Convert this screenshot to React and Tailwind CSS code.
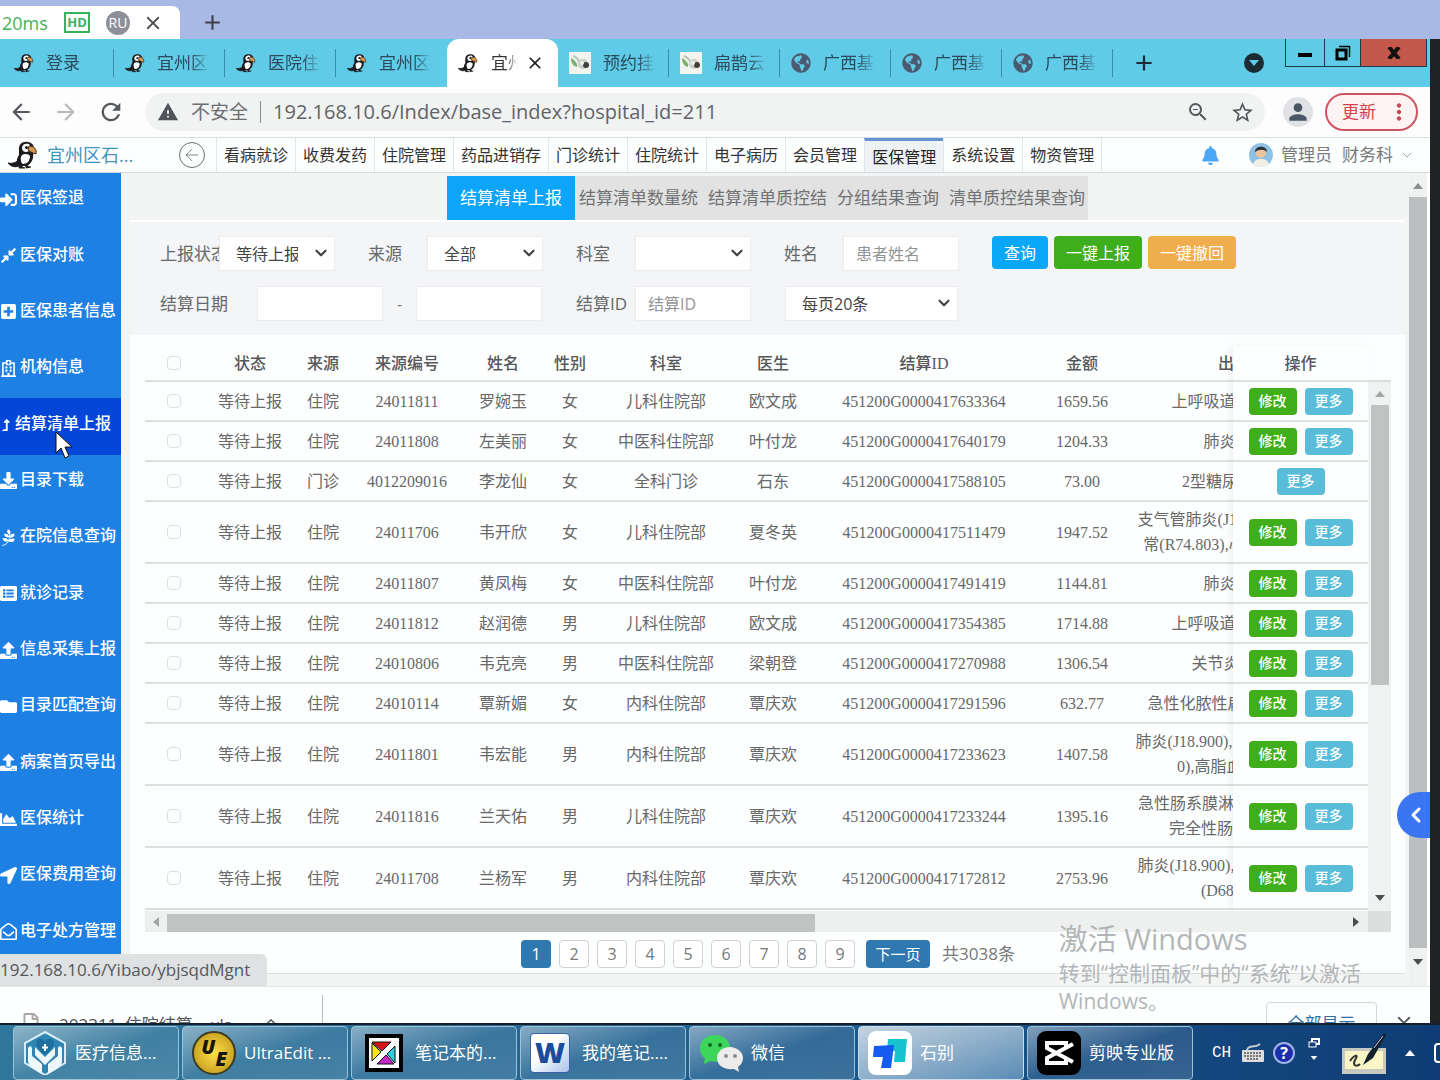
import {
  FaSignInAlt, FaCompressAlt, FaPlusSquare, FaRegHospital, FaLevelUpAlt, FaDownload,
  FaPagelines, FaListAlt, FaUpload, FaFolder, FaChartArea, FaLocationArrow,
  FaRegEnvelopeOpen, FaGlobeAmericas, FaBell, FaRegFile,
} from "react-icons/fa";
import {
  MdArrowBack, MdArrowForward, MdRefresh, MdWarning, MdZoomOut, MdStarBorder,
  MdPerson, MdMoreVert, MdClose, MdAdd,
} from "react-icons/md";
import { ChevronDown, ChevronLeft, ChevronUp, ArrowLeft } from "lucide-react";

const browserTabs = [
  { id: 1, icon: "bird", title: "登录" },
  { id: 2, icon: "bird", title: "宜州区石别" },
  { id: 3, icon: "bird", title: "医院住院" },
  { id: 4, icon: "bird", title: "宜州区石别" },
  { id: 5, icon: "bird", title: "宜州区", active: true },
  { id: 6, icon: "photo", title: "预约挂号" },
  { id: 7, icon: "photo", title: "扁鹊云医" },
  { id: 8, icon: "globe", title: "广西基本" },
  { id: 9, icon: "globe", title: "广西基本" },
  { id: 10, icon: "globe", title: "广西基本" },
];

const navItems = [
  "看病就诊", "收费发药", "住院管理", "药品进销存", "门诊统计", "住院统计",
  "电子病历", "会员管理", "医保管理", "系统设置", "物资管理",
];

const sideItems = [
  { title: "医保签退", Icon: FaSignInAlt },
  { title: "医保对账", Icon: FaCompressAlt },
  { title: "医保患者信息", Icon: FaPlusSquare },
  { title: "机构信息", Icon: FaRegHospital },
  { title: "结算清单上报", Icon: FaLevelUpAlt, active: true },
  { title: "目录下载", Icon: FaDownload },
  { title: "在院信息查询", Icon: FaPagelines },
  { title: "就诊记录", Icon: FaListAlt },
  { title: "信息采集上报", Icon: FaUpload },
  { title: "目录匹配查询", Icon: FaFolder },
  { title: "病案首页导出", Icon: FaUpload },
  { title: "医保统计", Icon: FaChartArea },
  { title: "医保费用查询", Icon: FaLocationArrow },
  { title: "电子处方管理", Icon: FaRegEnvelopeOpen },
];

const subTabs = ["结算清单数量统", "结算清单质控结", "分组结果查询", "清单质控结果查询"];

const rows = [
  { source: "住院", no: "24011811", name: "罗婉玉", sex: "女", dept: "儿科住院部", doctor: "欧文成", id: "451200G0000417633364", amount: "1659.56", diag: ["上呼吸道感染(J06.900)"] },
  { source: "住院", no: "24011808", name: "左美丽", sex: "女", dept: "中医科住院部", doctor: "叶付龙", id: "451200G0000417640179", amount: "1204.33", diag: ["肺炎(J18.900)"] },
  { source: "门诊", no: "4012209016", name: "李龙仙", sex: "女", dept: "全科门诊", doctor: "石东", id: "451200G0000417588105", amount: "73.00", diag: ["2型糖尿病(E11.900)"], moreOnly: true },
  { source: "住院", no: "24011706", name: "韦开欣", sex: "女", dept: "儿科住院部", doctor: "夏冬英", id: "451200G0000417511479", amount: "1947.52", diag: ["支气管肺炎(J18.000),肌酸激酶异", "常(R74.803),心肌损害(I51.802),"] },
  { source: "住院", no: "24011807", name: "黄凤梅", sex: "女", dept: "中医科住院部", doctor: "叶付龙", id: "451200G0000417491419", amount: "1144.81", diag: ["肺炎(J18.900)"] },
  { source: "住院", no: "24011812", name: "赵润德", sex: "男", dept: "儿科住院部", doctor: "欧文成", id: "451200G0000417354385", amount: "1714.88", diag: ["上呼吸道感染(J06.900)"] },
  { source: "住院", no: "24010806", name: "韦克亮", sex: "男", dept: "中医科住院部", doctor: "梁朝登", id: "451200G0000417270988", amount: "1306.54", diag: ["关节炎(M13.900)"] },
  { source: "住院", no: "24010114", name: "覃新媚", sex: "女", dept: "内科住院部", doctor: "覃庆欢", id: "451200G0000417291596", amount: "632.77", diag: ["急性化脓性扁桃体炎(J03.901)"] },
  { source: "住院", no: "24011801", name: "韦宏能", sex: "男", dept: "内科住院部", doctor: "覃庆欢", id: "451200G0000417233623", amount: "1407.58", diag: ["肺炎(J18.900),肝功能异常(R94.50", "0),高脂血症(E78.500)"] },
  { source: "住院", no: "24011816", name: "兰天佑", sex: "男", dept: "儿科住院部", doctor: "覃庆欢", id: "451200G0000417233244", amount: "1395.16", diag: ["急性肠系膜淋巴结炎(I88.000),不", "完全性肠梗阻(K56.700)"] },
  { source: "住院", no: "24011708", name: "兰杨军", sex: "男", dept: "内科住院部", doctor: "覃庆欢", id: "451200G0000417172812", amount: "2753.96", diag: ["肺炎(J18.900),凝血功能障碍疾病", "(D68.900x001)"] },
];

const Bird = ({ className }) => (
  <svg viewBox="0 0 30 28" className={className} aria-hidden="true">
    <path d="M11 10 C10 3 15 0 20 1 C26 2 27 7 25 11 C26 17 24 22 19 25 L12 25 C8 23 8 18 11 14 Z" fill="#1d1a1e" />
    <path d="M14 7 C14 3 18 2 21 3 C23 5 23 8 21 10 C18 12 14 11 14 7 Z" fill="#fdfdfd" />
    <path d="M14 14 C17 12 21 13 22 15 C22 20 19 23 15 23 C12 21 12 17 14 14 Z" fill="#fdfdfd" />
    <path d="M21 5 C26 5 29 8 28 13 C25 12 22 11 20 9 Z" fill="#d9954a" stroke="#3a2a1d" strokeWidth="1" />
    <circle cx="18.500" cy="6.500" r="1.500" fill="#1d1a1e" />
    <path d="M12 18 C8 22 4 23 0 22 C3 26 8 27 13 24 Z M12 24 L11 27 L17 27 M18 24 L18 27 L23 26" fill="#1d1a1e" stroke="#1d1a1e" strokeWidth="1" />
  </svg>
);

const TabIcon = ({ kind }) => {
  if (kind === "bird") return <Bird className="h-5 w-5 shrink-0" />;
  if (kind === "globe") return <FaGlobeAmericas className="h-5 w-5 shrink-0 text-[#4b5a70]" />;
  return (
    <svg viewBox="0 0 22 22" className="h-[22px] w-[22px] shrink-0" aria-hidden="true">
      <rect width="22" height="22" fill="#f1f5ee" />
      <path d="M2 6 C6 8 9 12 8 15 C4 14 2 11 2 6 Z" fill="#7fae6c" />
      <path d="M4 4 C9 5 9 9 12 11" stroke="#b9c4b9" strokeWidth="2" fill="none" />
      <circle cx="14" cy="12" r="5" fill="#c8cfca" />
      <circle cx="17" cy="13" r="3" fill="#3b423c" />
      <circle cx="13" cy="11" r="2" fill="#eef2ee" />
    </svg>
  );
};

const Triangle = ({ className }) => (
  <svg viewBox="0 0 10 6" className={className} aria-hidden="true">
    <path d="M0 6 L5 0 L10 6 Z" fill="currentColor" />
  </svg>
);

const RemoteBar = () => (
  <header className="flex h-[39px] shrink-0 items-end bg-[#a9b9e6]">
    <div className="flex h-[33px] w-[180px] items-center rounded-tr-lg bg-white pl-[2px]">
      <span className="w-[62px] text-lg text-[#3fb25c]">20ms</span>
      <span className="flex h-[21px] w-[26px] items-center justify-center border-2 border-[#37b35d] text-[13px] font-bold text-[#37b35d]">HD</span>
      <span className="ml-4 flex h-6 w-6 items-center justify-center rounded-full bg-[#8d8f99] text-sm text-white">RU</span>
      <button aria-label="关闭" className="ml-3 text-[#4c4c50]">
        <MdClose size={22} />
      </button>
    </div>
    <button aria-label="新建" className="mb-1 ml-5 text-[#3c3f48]">
      <MdAdd size={25} />
    </button>
  </header>
);

const BrowserTabs = () => (
  <div className="flex h-12 shrink-0 bg-[#60cbe6] pl-[3px]">
    {browserTabs.map((tab) =>
      tab.active ? (
        <div key={tab.id} className="flex w-[111px] shrink-0 items-center rounded-t-xl bg-white pl-[11px]">
          <TabIcon kind={tab.icon} />
          <span className="ml-[13px] w-[27px] overflow-hidden whitespace-nowrap text-[17px] text-[#333] [mask-image:linear-gradient(90deg,#000_55%,transparent)]">{tab.title}</span>
          <button aria-label="关闭标签" className="ml-[7px] text-[#222]">
            <MdClose size={20} />
          </button>
        </div>
      ) : (
        <div key={tab.id} className="flex w-[111px] shrink-0 items-center pl-[11px]">
          <TabIcon kind={tab.icon} />
          <span className="ml-3 w-[53px] overflow-hidden whitespace-nowrap text-[17px] text-[#2b4a5c] [mask-image:linear-gradient(90deg,#000_65%,transparent)]">{tab.title}</span>
          {tab.id !== 4 && <span className="ml-auto h-7 w-px bg-[#3a8ba6]" />}
        </div>
      )
    )}
    <button aria-label="新标签" className="ml-[18px] text-[#1c2a33]">
      <MdAdd size={26} />
    </button>
    <span className="my-auto ml-auto mr-[21px] flex h-5 w-5 items-center justify-center rounded-full bg-[#1c2a33] text-[#60cbe6]">
      <Triangle className="h-[6px] w-[10px] rotate-180" />
    </span>
    <div className="mr-[3px] flex h-7 border-x border-b border-[#1a3c4a]">
      <button aria-label="最小化" className="flex w-[39px] items-center justify-center border-r border-[#1a3c4a]">
        <span className="mt-1 h-1 w-[14px] bg-black" />
      </button>
      <button aria-label="还原" className="flex w-9 items-center justify-center border-r border-[#1a3c4a]">
        <svg viewBox="0 0 16 16" className="h-4 w-4" fill="none" stroke="#000">
          <rect x="2" y="5" width="9" height="9" strokeWidth="3" />
          <path d="M4 1.500 H14.500 V12" strokeWidth="1.500" />
        </svg>
      </button>
      <button aria-label="关闭窗口" className="flex w-[65px] items-center justify-center bg-[#c4584c]">
        <svg viewBox="0 0 14 12" className="h-3 w-[14px]">
          <path d="M2 0 L12 12 M12 0 L2 12" stroke="#111" strokeWidth="4" />
        </svg>
      </button>
    </div>
  </div>
);

const AddressBar = () => (
  <div className="flex h-[51px] shrink-0 items-center border-b border-[#d8dadc] bg-[#fdfdfd] pl-2">
    <button aria-label="后退" className="text-[#55585c]"><MdArrowBack size={26} /></button>
    <button aria-label="前进" className="ml-[19px] text-[#b6b8ba]"><MdArrowForward size={26} /></button>
    <button aria-label="刷新" className="ml-[18px] text-[#55585c]"><MdRefresh size={28} /></button>
    <div className="ml-5 flex h-[38px] min-w-0 flex-1 items-center rounded-full bg-[#f1f3f3] pl-3">
      <MdWarning size={22} className="shrink-0 text-[#505458]" />
      <span className="ml-3 shrink-0 text-[19px] text-[#6c6f72]">不安全</span>
      <span className="ml-3 h-[22px] w-px bg-[#8b8d90]" />
      <input
        aria-label="网址"
        readOnly
        value="192.168.10.6/Index/base_index?hospital_id=211"
        className="ml-3 min-w-0 flex-1 bg-transparent text-[20px] text-[#5f6367] outline-none"
      />
      <button aria-label="缩放" className="text-[#55585c]"><MdZoomOut size={24} /></button>
      <button aria-label="收藏" className="ml-5 mr-[10px] text-[#55585c]"><MdStarBorder size={25} /></button>
    </div>
    <span className="ml-[18px] flex h-[30px] w-[30px] items-center justify-center rounded-full bg-[#e0e2e6] text-[#4a5666]">
      <MdPerson size={26} />
    </span>
    <button className="ml-3 mr-3 flex h-[38px] w-[93px] items-center rounded-full border-2 border-[#cf5560] bg-[#fdf3f3] pl-[15px] text-[17px] text-[#d2434d]">
      更新
      <MdMoreVert size={26} className="ml-[10px]" />
    </button>
  </div>
);

const AppNav = () => (
  <nav className="flex h-[35px] shrink-0 items-center border-b border-[#d5d7d8] bg-[#fdfefe] pl-2">
    <Bird className="h-7 w-[30px]" />
    <a href="#home" className="ml-[9px] w-[93px] text-lg text-[#4495bd]">宜州区石...</a>
    <button aria-label="返回" className="ml-[39px] mr-[11px] flex h-[26px] w-[26px] items-center justify-center rounded-full border border-[#6b6e70] text-[#6b6e70]">
      <ArrowLeft size={20} strokeWidth={1} />
    </button>
    <div className="flex h-full">
      {navItems.map((item) => (
        <a
          key={item}
          href="#nav"
          className={
            item === "医保管理"
              ? "flex items-center border-l border-t-3 border-l-[#e4e6e8] border-t-[#6592d3] bg-[#eef2f5] px-[7px] text-base text-[#222]"
              : "flex items-center border-l border-[#e4e6e8] px-[7px] text-base text-[#333]"
          }
        >
          {item}
        </a>
      ))}
      <span className="w-px bg-[#e4e6e8]" />
    </div>
    <FaBell size={19} className="ml-auto text-[#4aa8f7]" />
    <svg viewBox="0 0 24 24" className="ml-[29px] h-6 w-6">
      <circle cx="12" cy="12" r="12" fill="#8fc0e6" />
      <path d="M4 22 C5 17 8 16 12 16 C16 16 19 17 20 22 C15 25 9 25 4 22 Z" fill="#f2f0e6" />
      <circle cx="12" cy="10" r="5" fill="#e9c39c" />
      <path d="M6 9 C6 2 18 2 18 9 C15 6 10 6 6 9 Z" fill="#2a2f38" />
    </svg>
    <button className="ml-2 mr-[15px] flex items-center text-[17px] text-[#77797b]">
      <span>管理员</span>
      <span className="ml-[10px] mr-[6px]">财务科</span>
      <ChevronDown size={16} strokeWidth={1} />
    </button>
  </nav>
);

const SideBar = () => (
  <aside className="w-[121px] shrink-0 overflow-hidden bg-[#1f80e4]">
    <ul className="flex h-full flex-col pb-6">
      {sideItems.map(({ title, Icon, active }) => (
        <li key={title} className={active ? "min-h-0 flex-1 bg-[#0447d8]" : "min-h-0 flex-1"}>
          <a href="#side" className="flex h-full items-center gap-[3px] whitespace-nowrap pb-2 text-base font-medium text-white">
            <Icon size={active ? 12 : 17} className="mt-1 shrink-0" />
            {title}
          </a>
        </li>
      ))}
    </ul>
  </aside>
);

const Select = ({ id, label, value, className }) => (
  <div className={"relative h-[35px] " + className}>
    <select id={id} aria-label={label} className="h-full w-full appearance-none border border-[#ececee] bg-white pl-4 pr-9 text-base text-[#444]">
      <option>{value}</option>
    </select>
    <ChevronDown size={18} strokeWidth={3} className="pointer-events-none absolute right-[5px] top-2 text-[#444]" />
  </div>
);

const labelClass = "w-[59px] shrink-0 overflow-hidden whitespace-nowrap text-[17px] text-[#66696b]";
const inputClass = "h-[35px] border border-[#ececee] bg-white px-3 text-base placeholder:text-[#929496]";

const FilterPanel = () => (
  <form className="flex flex-col gap-[15px] bg-[#f4f5f7] py-[14px] pl-[30px]">
    <div className="flex h-[35px] items-center">
      <label htmlFor="status" className={labelClass}>上报状态</label>
      <Select id="status" value="等待上报" className="mr-[33px] w-[116px]" />
      <label htmlFor="source" className={labelClass}>来源</label>
      <Select id="source" value="全部" className="mr-[33px] w-[116px]" />
      <label htmlFor="dept" className={labelClass}>科室</label>
      <Select id="dept" value="" className="mr-[33px] w-[116px]" />
      <label htmlFor="name" className={labelClass}>姓名</label>
      <input id="name" placeholder="患者姓名" className={inputClass + " mr-[33px] w-[116px]"} />
      <div className="flex h-full items-start gap-[6px] text-base text-white">
        <button type="button" className="h-[33px] rounded-sm bg-[#0aa7f7] px-3">查询</button>
        <button type="button" className="h-[33px] rounded-sm bg-[#3eae1c] px-3">一键上报</button>
        <button type="button" className="h-[33px] rounded-sm bg-[#f0ad4e] px-3">一键撤回</button>
      </div>
    </div>
    <div className="flex h-[35px] items-center">
      <label htmlFor="from" className="w-[97px] text-[17px] text-[#66696b]">结算日期</label>
      <input id="from" className={inputClass + " w-[126px]"} />
      <span className="w-[33px] text-center text-[#777]">-</span>
      <input id="to" aria-label="结束日期" className={inputClass + " mr-[34px] w-[126px]"} />
      <label htmlFor="sid" className={labelClass}>结算ID</label>
      <input id="sid" placeholder="结算ID" className={inputClass + " mr-[34px] w-[116px]"} />
      <Select id="size" label="每页条数" value="每页20条" className="w-[173px]" />
    </div>
  </form>
);

const thClass = "h-9 border-b-2 border-[#dcdedf] font-medium text-[#55585a]";

const SettlementTable = () => (
  <table className="w-[1226px] table-fixed border-separate border-spacing-0 text-center font-['Liberation_Serif','Noto_Sans_CJK_SC',serif] text-base leading-[25px] text-[#66686a]">
    <colgroup>
      <col className="w-[58px]" />
      <col className="w-[94px]" />
      <col className="w-[52px]" />
      <col className="w-[116px]" />
      <col className="w-[76px]" />
      <col className="w-[58px]" />
      <col className="w-[134px]" />
      <col className="w-[80px]" />
      <col className="w-[222px]" />
      <col className="w-[94px]" />
      <col className="w-[242px]" />
    </colgroup>
    <thead>
      <tr>
        <th className={thClass}>
          <input type="checkbox" aria-label="全选" className="mx-auto block h-[14px] w-[14px] appearance-none rounded-sm border border-[#dcdfe0]" />
        </th>
        {["状态", "来源", "来源编号", "姓名", "性别", "科室", "医生", "结算ID", "金额", "出院诊断"].map((title) => (
          <th key={title} className={thClass}>{title}</th>
        ))}
      </tr>
    </thead>
    <tbody>
      {rows.map((row) => (
        <tr key={row.id} className={row.diag.length > 1 ? "h-[62px] *:border-b-2 *:border-[#dcdedf]" : "h-10 *:border-b-2 *:border-[#dcdedf]"}>
          <td>
            <input type="checkbox" aria-label={row.name} className="mx-auto block h-[14px] w-[14px] appearance-none rounded-sm border border-[#dcdfe0]" />
          </td>
          <td>等待上报</td>
          <td>{row.source}</td>
          <td>{row.no}</td>
          <td>{row.name}</td>
          <td>{row.sex}</td>
          <td>{row.dept}</td>
          <td>{row.doctor}</td>
          <td>{row.id}</td>
          <td>{row.amount}</td>
          <td className="whitespace-nowrap">
            {row.diag.map((line) => (
              <div key={line}>{line}</div>
            ))}
          </td>
        </tr>
      ))}
    </tbody>
  </table>
);

const ActionTable = () => (
  <table className="w-full border-separate border-spacing-0 text-center">
    <thead>
      <tr>
        <th className={thClass}>操作</th>
      </tr>
    </thead>
    <tbody>
      {rows.map((row) => (
        <tr key={row.id} className={row.diag.length > 1 ? "h-[62px]" : "h-10"}>
          <td className="border-b-2 border-[#dcdedf]">
            <div className="flex justify-center gap-2 text-sm font-medium text-white">
              {!row.moreOnly && <button className="h-[27px] w-12 rounded-sm bg-[#3fae1a]">修改</button>}
              <button className="h-[27px] w-12 rounded-sm bg-[#59bdd9]">更多</button>
            </div>
          </td>
        </tr>
      ))}
    </tbody>
  </table>
);

const Pagination = () => (
  <div className="flex items-center justify-center gap-2 pb-[5px] pt-2 text-base text-[#77797b]">
    <button className="h-7 w-[30px] rounded-sm bg-[#3079b0] text-white">1</button>
    {[2, 3, 4, 5, 6, 7, 8, 9].map((page) => (
      <button key={page} className="h-7 w-[30px] rounded-sm border border-[#cfd1d2] bg-white">{page}</button>
    ))}
    <button className="ml-[3px] h-7 w-16 rounded-sm bg-[#3079b0] text-[15px] text-white">下一页</button>
    <span className="ml-1 text-[17px] leading-7">共3038条</span>
  </div>
);

const Content = () => (
  <main className="flex min-w-0 flex-1 flex-col overflow-hidden bg-[#f3f5f5] pl-[9px] pr-1">
    <div className="flex h-[49px] shrink-0 justify-center border-b-2 border-white pt-[3px] text-[17px]">
      <a href="#report" className="flex w-32 items-center justify-center bg-[#0ca5f9] text-white">结算清单上报</a>
      <div className="flex items-center gap-[10px] bg-[#e2e2e2] pl-1 pr-[3px] text-[#6f7173]">
        {subTabs.map((tab) => (
          <a key={tab} href="#sub">{tab}</a>
        ))}
      </div>
    </div>
    <FilterPanel />
    <div className="flex min-h-0 flex-1 flex-col border-b border-[#dadde0] bg-[#fdfefe] pl-[15px] pr-[14px] pt-[11px]">
      <div className="flex min-h-0 flex-1">
        <div className="min-w-0 flex-1 overflow-hidden">
          <SettlementTable />
        </div>
        <div className="w-[135px] shrink-0 overflow-hidden bg-[#fdfefe] shadow-[-3px_0_6px_rgba(0,0,0,0.05)]">
          <ActionTable />
        </div>
        <div className="flex w-[23px] shrink-0 flex-col pt-[34px]">
          <div className="flex flex-1 flex-col items-center border-t-2 border-[#dcdedf] bg-[#f0f1f1]">
            <Triangle className="mb-2 mt-[9px] h-[6px] w-[10px] text-[#a3a5a7]" />
            <div className="h-[280px] w-[18px] bg-[#c1c3c3]" />
            <Triangle className="mb-[10px] mt-auto h-[6px] w-[10px] rotate-180 text-[#4b4d4f]" />
          </div>
        </div>
      </div>
      <div className="flex h-[21px] shrink-0 bg-[#eeefef]">
        <span className="flex w-[22px] items-center justify-center">
          <Triangle className="h-[6px] w-[10px] -rotate-90 text-[#a3a5a7]" />
        </span>
        <span className="mt-[3px] w-[52%] bg-[#c1c3c3]" />
        <span className="ml-auto flex w-6 items-center justify-center">
          <Triangle className="h-[6px] w-[10px] rotate-90 text-[#4b4d4f]" />
        </span>
        <span className="w-[23px] bg-[#dcdddd]" />
      </div>
      <Pagination />
    </div>
    <div className="h-3 shrink-0" />
  </main>
);

const DownloadBar = () => (
  <footer className="flex h-[37px] shrink-0 overflow-hidden border-t border-[#e3e5e6] bg-[#fdfefe]">
    <div className="mt-2 flex h-12 w-[323px] items-start border-r border-[#b9bbbd] pl-[21px] pt-[18px]">
      <FaRegFile size={20} className="text-[#a9a4a4]" />
      <span className="ml-[18px] text-[17px] leading-6 text-[#55585a]">202311_住院结算....xls</span>
      <ChevronUp size={18} className="ml-[30px] text-[#55585a]" />
    </div>
    <button className="ml-auto mt-[15px] h-11 w-[111px] rounded-sm border border-[#d5d7da] text-[17px] text-[#2f6fa8]">全部显示</button>
    <button aria-label="关闭下载栏" className="ml-4 mr-[15px] mt-6 h-6 text-[#55585a]"><MdClose size={22} /></button>
  </footer>
);

const MedicalIcon = () => (
  <svg viewBox="0 0 44 44" className="h-11 w-11 shrink-0">
    <path d="M22 1 L42 12 V32 L22 44 L2 32 V12 Z" fill="#2f86b5" stroke="#d9edf5" strokeWidth="2" />
    <path d="M5 17 C7 14 9 15 9 18 V25 L19 33 V43 C10 38 5 35 5 30 Z M39 17 C37 14 35 15 35 18 V25 L25 33 V43 C34 38 39 35 39 30 Z" fill="#eef8fb" />
    <path d="M12 16 L22 26 L32 16 L32 24 L22 34 L12 24 Z" fill="#eef8fb" />
    <path d="M22 24 C10 15 12 7 18 8 C20 8 21 9 22 11 C23 9 24 8 26 8 C32 7 34 15 22 24 Z" fill="#1e6f9e" />
    <path d="M22 13 V20 M19 16.500 H25" stroke="#fff" strokeWidth="2" />
  </svg>
);

const UltraEditIcon = () => (
  <span className="flex h-11 w-11 shrink-0 items-center justify-center rounded-full border-2 border-[#3c3b23] bg-radial from-[#ffe14a] to-[#b98f10] text-xl font-black italic text-[#18160c]">
    <span className="mb-3">U</span>
    <span className="mt-3">E</span>
  </span>
);

const NotebookIcon = () => (
  <svg viewBox="0 0 38 38" className="mx-1 h-[38px] w-[38px] shrink-0">
    <rect width="38" height="38" fill="#000" />
    <rect x="4" y="4" width="30" height="30" fill="#fff" />
    <path d="M7 8 H26 L17 17 Z" fill="#d8151b" stroke="#111" />
    <path d="M7 9 L16 18 L7 27 Z" fill="#f4e61b" stroke="#111" />
    <path d="M30 12 V29 L22 20 Z" fill="#25d3e0" stroke="#111" />
    <path d="M12 30 H29 L21 21 Z" fill="#c926c9" stroke="#111" />
    <path d="M5 33 L33 5" stroke="#fff" strokeWidth="4" />
  </svg>
);

const WordIcon = () => (
  <span className="mr-1 flex h-10 w-10 shrink-0 items-start justify-center rounded-sm border border-[#3a62a5] bg-linear-to-br from-white from-40% to-[#a9c2ea] text-[29px] font-black leading-9 text-[#1b4c9c]">
    W
  </span>
);

const WechatIcon = () => (
  <svg viewBox="0 0 44 38" className="h-[38px] w-11 shrink-0">
    <path d="M16 1 C7 1 1 7 1 14 C1 19 3 22 6 24 L5 30 L11 27 C24 30 31 22 31 14 C31 7 25 1 16 1 Z" fill="#3cd75a" />
    <circle cx="11" cy="11" r="2" fill="#14662a" />
    <circle cx="21" cy="11" r="2" fill="#14662a" />
    <path d="M31 13 C23 13 18 18 18 24 C18 31 24 36 35 35 L40 38 L39 33 C42 31 44 28 44 24 C44 18 38 13 31 13 Z" fill="#ececec" />
    <circle cx="27" cy="22" r="2" fill="#8b8d8f" />
    <circle cx="36" cy="22" r="2" fill="#8b8d8f" />
  </svg>
);

const ToDeskIcon = () => (
  <svg viewBox="0 0 44 44" className="h-11 w-11 shrink-0">
    <rect width="44" height="44" rx="8" fill="#fff" />
    <path d="M20 8 H39 L37 31 H26 L27 20 H19 Z" fill="#16c4cf" />
    <path d="M6 15 L26 14 L23 37 H13 L15 26 H5 Z" fill="#155bf0" />
  </svg>
);

const CapCutIcon = () => (
  <svg viewBox="0 0 44 44" className="h-11 w-11 shrink-0">
    <rect width="44" height="44" rx="9" fill="#000" />
    <path d="M29 17 V12 H10 V17 L36 31 M29 27 V32 H10 V27 L36 13" stroke="#fff" strokeWidth="4" fill="none" />
  </svg>
);

const taskItems = [
  { title: "医疗信息...", Icon: MedicalIcon },
  { title: "UltraEdit ...", Icon: UltraEditIcon },
  { title: "笔记本的...", Icon: NotebookIcon },
  { title: "我的笔记....", Icon: WordIcon },
  { title: "微信", Icon: WechatIcon },
  { title: "石别", Icon: ToDeskIcon, active: true },
  { title: "剪映专业版", Icon: CapCutIcon },
];

const TaskBar = () => (
  <div className="flex h-[57px] shrink-0 items-center gap-[3px] overflow-hidden border-t-2 border-[#16202c] bg-linear-to-r from-[#2f779b] via-[#1f5f90] to-[#0f3c74] pl-[13px]">
    {taskItems.map(({ title, Icon, active }) => (
      <button
        key={title}
        className={
          active
            ? "flex h-[54px] w-[166px] shrink-0 items-center gap-2 rounded-sm border border-[#c9dcea] bg-linear-to-br from-[#c4d3df] to-[#5a8cb5] pl-[9px] text-[17px] text-white"
            : "flex h-[54px] w-[166px] shrink-0 items-center gap-2 rounded-sm border border-[#9cc2d8] bg-linear-to-br from-white/45 via-white/10 to-white/15 pl-[9px] text-[17px] text-white"
        }
      >
        <Icon />
        <span className="whitespace-nowrap">{title}</span>
      </button>
    ))}
    <div className="ml-4 flex flex-1 items-center text-white">
      <span className="w-[30px] font-['Liberation_Mono',monospace] text-base">CH</span>
      <svg viewBox="0 0 22 20" className="h-5 w-[22px]">
        <path d="M5 7 C7 1 12 6 18 1" stroke="#c9cdd0" strokeWidth="2" fill="none" />
        <rect y="7" width="22" height="12" rx="1" fill="#dcdddc" />
        <path d="M2 10 H20 M2 13 H20 M5 16 H17" stroke="#777" strokeWidth="2" strokeDasharray="2 1" />
      </svg>
      <span className="ml-[9px] flex h-[22px] w-[22px] items-center justify-center rounded-full border-2 border-[#9fb4e8] bg-[#1b2fa8] text-base font-bold">?</span>
      <span className="mb-2 ml-[13px] flex flex-col items-center gap-2">
        <svg viewBox="0 0 12 10" className="h-[10px] w-3" fill="none" stroke="#fff">
          <path d="M4 4 V1 H11 V6 H8" strokeWidth="2" />
          <rect x="1" y="4" width="7" height="5" strokeWidth="1" />
        </svg>
        <Triangle className="h-1 w-2 rotate-180" />
      </span>
      <svg viewBox="0 0 46 42" className="ml-[22px] h-[42px] w-[46px]">
        <rect y="16" width="44" height="26" fill="#c6c9c2" />
        <rect x="3" y="19" width="38" height="18" fill="#fbf6c6" />
        <path d="M8 29 C13 22 17 22 13 28 C10 34 15 35 18 32" stroke="#333" strokeWidth="2" fill="none" />
        <path d="M21 33 L26 22 L42 1 L44 3 L31 26 Z" fill="#14202b" />
        <path d="M32 16 L41 4" stroke="#b9c5cf" strokeWidth="1" />
      </svg>
      <Triangle className="ml-[17px] h-[6px] w-[10px]" />
      <span className="ml-auto h-5 w-[6px] rounded-l-sm border-2 border-r-0 border-white" />
    </div>
  </div>
);

const App = () => {
  return (
    <div className="relative flex h-screen flex-col overflow-hidden bg-white font-['Open_Sans','Noto_Sans_CJK_SC',sans-serif]">
      <RemoteBar />
      <div className="flex min-h-0 flex-1">
        <div className="relative flex min-w-0 flex-1 flex-col">
          <BrowserTabs />
          <AddressBar />
          <AppNav />
          <div className="relative flex min-h-0 flex-1">
            <SideBar />
            <Content />
            <div className="mr-[3px] flex w-[18px] shrink-0 flex-col items-center bg-[#f0f2f2]">
              <Triangle className="mb-2 mt-[10px] h-[6px] w-[10px] text-[#8c8e90]" />
              <div className="w-full flex-1 bg-[#bcbfc0]" />
              <Triangle className="mb-[21px] mt-[11px] h-[6px] w-[10px] rotate-180 text-[#4b4d4f]" />
            </div>

            {/* mouse pointer */}
            <svg viewBox="0 0 18 28" className="absolute left-[55px] top-[258px] h-7 w-[18px]">
              <path d="M1 1 V22 L6 17 L10 27 L14 25 L10 16 H17 Z" fill="#fff" stroke="#111" strokeWidth="1" />
            </svg>

            {/* link address shown while hovering */}
            <div className="absolute bottom-0 left-0 flex h-8 w-[267px] items-center overflow-hidden whitespace-nowrap rounded-tr-md bg-[#dfe1e2] text-[17px] text-[#55585c]">
              192.168.10.6/Yibao/ybjsqdMgnt
            </div>

            <button aria-label="展开" className="absolute bottom-[148px] right-0 flex h-[46px] w-[33px] items-center justify-center rounded-l-full bg-[#3a76f2] pl-1 text-white">
              <ChevronLeft size={24} strokeWidth={3} />
            </button>
          </div>
          <DownloadBar />
        </div>
        <div className="w-[10px] shrink-0 bg-[#212223]" />
      </div>
      <TaskBar />

      <div className="pointer-events-none absolute bottom-[65px] right-[79px] text-[21px] leading-7 text-[#b3b6b8]">
        <p className="text-[29px] leading-10">激活 Windows</p>
        <p>转到“控制面板”中的“系统”以激活</p>
        <p>Windows。</p>
      </div>
    </div>
  );
};

export default App;
